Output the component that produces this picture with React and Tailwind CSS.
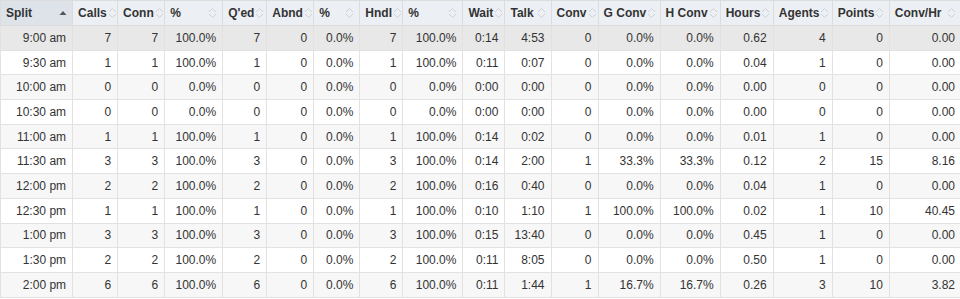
import React from 'react';

const columns = [
  { label: 'Split', width: 72 },
  { label: 'Calls', width: 45 },
  { label: 'Conn', width: 47 },
  { label: '%', width: 58 },
  { label: "Q'ed", width: 44 },
  { label: 'Abnd', width: 47 },
  { label: '%', width: 46 },
  { label: 'Hndl', width: 43 },
  { label: '%', width: 60 },
  { label: 'Wait', width: 42 },
  { label: 'Talk', width: 46 },
  { label: 'Conv', width: 47 },
  { label: 'G Conv', width: 62 },
  { label: 'H Conv', width: 60 },
  { label: 'Hours', width: 53 },
  { label: 'Agents', width: 59 },
  { label: 'Points', width: 57 },
  { label: 'Conv/Hr', width: 72 },
];

const rows = [
  ['9:00 am', '7', '7', '100.0%', '7', '0', '0.0%', '7', '100.0%', '0:14', '4:53', '0', '0.0%', '0.0%', '0.62', '4', '0', '0.00'],
  ['9:30 am', '1', '1', '100.0%', '1', '0', '0.0%', '1', '100.0%', '0:11', '0:07', '0', '0.0%', '0.0%', '0.04', '1', '0', '0.00'],
  ['10:00 am', '0', '0', '0.0%', '0', '0', '0.0%', '0', '0.0%', '0:00', '0:00', '0', '0.0%', '0.0%', '0.00', '0', '0', '0.00'],
  ['10:30 am', '0', '0', '0.0%', '0', '0', '0.0%', '0', '0.0%', '0:00', '0:00', '0', '0.0%', '0.0%', '0.00', '0', '0', '0.00'],
  ['11:00 am', '1', '1', '100.0%', '1', '0', '0.0%', '1', '100.0%', '0:14', '0:02', '0', '0.0%', '0.0%', '0.01', '1', '0', '0.00'],
  ['11:30 am', '3', '3', '100.0%', '3', '0', '0.0%', '3', '100.0%', '0:14', '2:00', '1', '33.3%', '33.3%', '0.12', '2', '15', '8.16'],
  ['12:00 pm', '2', '2', '100.0%', '2', '0', '0.0%', '2', '100.0%', '0:16', '0:40', '0', '0.0%', '0.0%', '0.04', '1', '0', '0.00'],
  ['12:30 pm', '1', '1', '100.0%', '1', '0', '0.0%', '1', '100.0%', '0:10', '1:10', '1', '100.0%', '100.0%', '0.02', '1', '10', '40.45'],
  ['1:00 pm', '3', '3', '100.0%', '3', '0', '0.0%', '3', '100.0%', '0:15', '13:40', '0', '0.0%', '0.0%', '0.45', '1', '0', '0.00'],
  ['1:30 pm', '2', '2', '100.0%', '2', '0', '0.0%', '2', '100.0%', '0:11', '8:05', '0', '0.0%', '0.0%', '0.50', '1', '0', '0.00'],
  ['2:00 pm', '6', '6', '100.0%', '6', '0', '0.0%', '6', '100.0%', '0:11', '1:44', '1', '16.7%', '16.7%', '0.26', '3', '10', '3.82'],
];

// double chevron shown on unsorted columns
const SortBoth = () => (
  <svg width="9" height="12" viewBox="0 0 9 12" className="shrink-0">
    <path d="M1 5 L4.5 1.5 L8 5" fill="none" stroke="#d0d0d0" strokeWidth="1" />
    <path d="M1 7 L4.5 10.5 L8 7" fill="none" stroke="#d0d0d0" strokeWidth="1" />
  </svg>
);

const SortAsc = () => (
  <svg width="8" height="6" viewBox="0 0 8 6" className="shrink-0">
    <path d="M0.5 5 L4 1 L7.5 5 Z" fill="#555" />
  </svg>
);

export default function App() {
  return (
    <div className="w-[960px] h-[299px] overflow-hidden bg-white font-['Liberation_Sans',Arial,sans-serif] text-[12px] text-[#333]">
      <table className="table-fixed border-collapse w-[962px]">
        <colgroup>
          {columns.map((c, i) => (
            <col key={i} style={{ width: c.width }} />
          ))}
        </colgroup>
        <thead>
          <tr className="h-[25px]">
            {columns.map((c, i) => (
              <th
                key={i}
                className={`border border-[#dcdcdc] px-[5px] font-bold text-left ${i === 0 ? 'bg-[#dde3e9]' : 'bg-[#ecf0f4]'}`}
              >
                <div className="flex items-center justify-between gap-[1px]">
                  <span className="whitespace-nowrap">{c.label}</span>
                  {i === 0 ? <SortAsc /> : <SortBoth />}
                </div>
              </th>
            ))}
          </tr>
        </thead>
        <tbody>
          {rows.map((r, ri) => (
            <tr
              key={ri}
              className={`h-[24.7px] ${ri === 0 ? 'bg-[#e8e8e8]' : ri % 2 === 0 ? 'bg-[#f7f7f7]' : 'bg-white'}`}
            >
              {r.map((v, ci) => (
                <td key={ci} className="border border-[#e2e2e2] px-[6px] py-0 text-right whitespace-nowrap">
                  {v}
                </td>
              ))}
            </tr>
          ))}
        </tbody>
      </table>
    </div>
  );
}
